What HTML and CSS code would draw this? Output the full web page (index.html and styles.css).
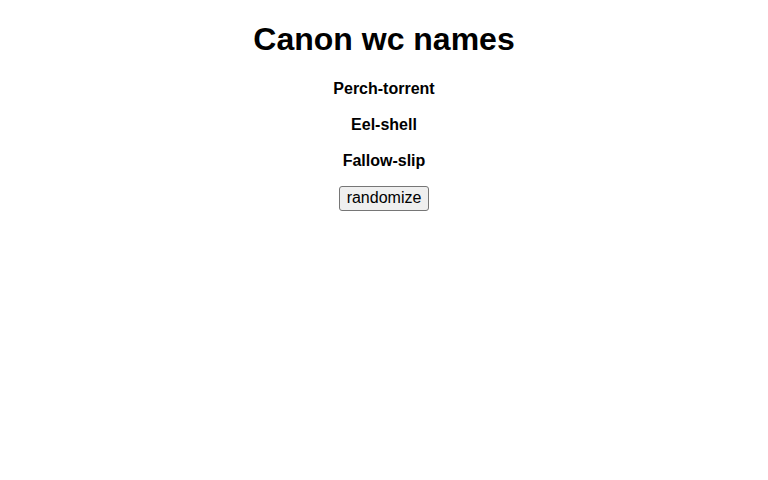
FILE: index.html
```html
<!DOCTYPE html>
<html lang="en">
<head>
<meta charset="utf-8">
<title>Canon wc names</title>
<link rel="stylesheet" href="styles.css">
</head>
<body>
  <main class="page">
    <h1 class="title">Canon wc names</h1>
    <ul class="names">
      <li class="name"><span>Perch</span>-<span>torrent</span></li>
      <li class="name"><span>Eel</span>-<span>shell</span></li>
      <li class="name"><span>Fallow</span>-<span>slip</span></li>
    </ul>
    <button class="randomize" type="button">randomize</button>
  </main>
</body>
</html>
```

FILE: styles.css
```css
html, body {
  background: #ffffff;
}

body {
  margin: 0;
  font-family: "Liberation Sans", Arial, sans-serif;
  color: #000000;
}

.page {
  display: flex;
  flex-direction: column;
  align-items: center;
  padding-top: 21.44px;
}

.title {
  margin: 0;
  font-size: 32px;
  font-weight: bold;
  line-height: 36.8px;
}

.names {
  list-style: none;
  margin: 21.5px 0 0;
  padding: 0;
  display: flex;
  flex-direction: column;
  align-items: center;
  gap: 17.6px;
}

.name {
  font-size: 16px;
  font-weight: bold;
  line-height: 18.4px;
}

.randomize {
  margin-top: 16px;
  font-family: "Liberation Sans", Arial, sans-serif;
  font-size: 16px;
  line-height: 18.4px;
  padding: 1px 7px;
  color: #000000;
  background: #efefef;
  border: 1px solid #767676;
  border-radius: 3px;
  height: 25px;
}
```
